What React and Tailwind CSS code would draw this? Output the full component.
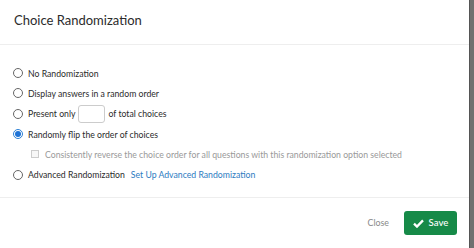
import { useState } from "react";

function Radio({ checked }) {
  return (
    <span
      className={`flex h-[10px] w-[10px] shrink-0 items-center justify-center rounded-full border ${
        checked ? "border-[#2a7fd4]" : "border-[#666]"
      } bg-white`}
    >
      {checked && <span className="h-[6px] w-[6px] rounded-full bg-[#1e73d6]" />}
    </span>
  );
}

export default function App() {
  const [choice, setChoice] = useState("flip");

  const Option = ({ id, children }) => (
    <label className="flex h-[20.3px] items-center gap-[5px] cursor-pointer" onClick={() => setChoice(id)}>
      <Radio checked={choice === id} />
      {children}
    </label>
  );

  return (
    <div className="flex h-[248px] w-[474px] bg-white font-['Lato',sans-serif] text-[#2b2b2b]">
      <div className="flex min-w-0 flex-1 flex-col">
        <div className="flex h-[45px] items-center border-b border-[#eee] pl-[14px] text-[13px] pb-[2px]">
          Choice Randomization
        </div>
        <div className="flex flex-1 flex-col pl-[13px] pt-[18px] text-[8.7px]">
          <Option id="none">No Randomization</Option>
          <Option id="random">Display answers in a random order</Option>
          <Option id="subset">
            <span className="flex items-center gap-[3px]">
              Present only
              <span className="h-[18px] w-[27px] rounded-[3px] border border-[#ccc]" />
              of total choices
            </span>
          </Option>
          <Option id="flip">Randomly flip the order of choices</Option>
          <div className="flex h-[20.3px] items-center gap-[6px] pl-[18px] text-[#999] whitespace-nowrap">
            <span className="h-[8px] w-[8px] border border-[#ccc] bg-[#f7f7f7]" />
            Consistently reverse the choice order for all questions with this randomization option selected
          </div>
          <Option id="advanced">
            <span>Advanced Randomization</span>
            <span className="ml-[1px] text-[#2d7bbf]">Set Up Advanced Randomization</span>
          </Option>
        </div>
        <div className="flex h-[51px] items-center justify-end gap-[15px] border-t border-[#eee] pr-[12px]">
          <span className="text-[8.8px] text-[#888]">Close</span>
          <button className="flex h-[24px] w-[53px] items-center justify-center gap-[5px] rounded-[3px] bg-[#168a48] text-[9.6px] font-medium text-white">
            <svg width="11" height="9" viewBox="0 0 12 10">
              <path d="M1 5.2 L4.3 8.4 L11 1.6" stroke="white" strokeWidth="2.6" fill="none" />
            </svg>
            Save
          </button>
        </div>
      </div>
      <div className="w-[5px] shrink-0 border-l border-[#555] bg-[#707070]" />
    </div>
  );
}
